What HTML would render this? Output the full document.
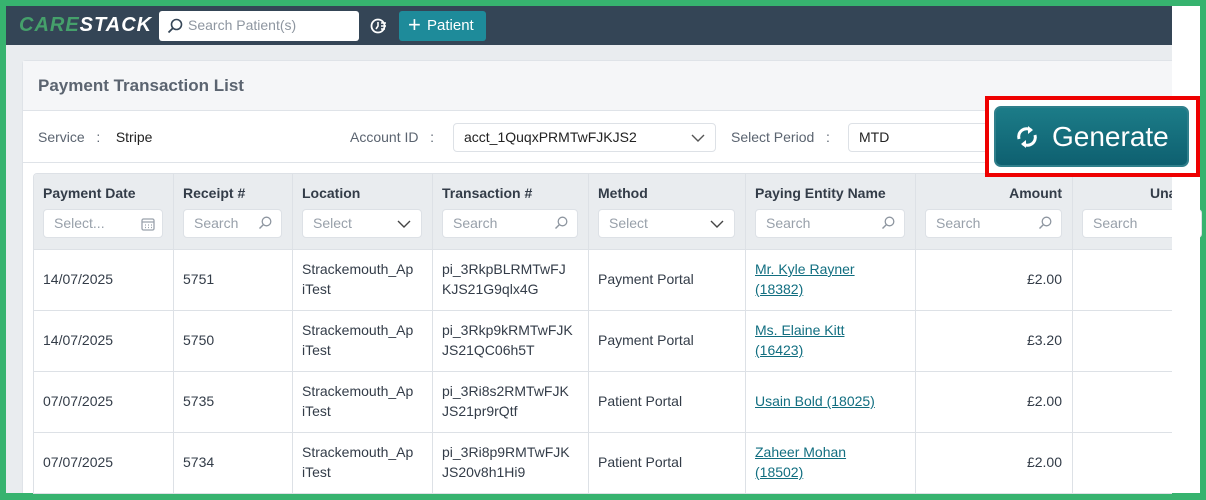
<!DOCTYPE html>
<html><head><style>
*{box-sizing:border-box;margin:0;padding:0}
body{width:1206px;height:500px;overflow:hidden;background:#37b36f;font-family:"Liberation Sans",sans-serif;position:relative;font-size:14px;color:#333c48}
.a{position:absolute}
.nav{left:6px;top:6px;width:1166px;height:39px;background:#344556}
.main{left:6px;top:45px;width:1166px;height:448px;background:#e9ecef;overflow:hidden}
.strip{left:1172px;top:6px;width:28px;height:487px;background:#fff;z-index:5}
.card{left:16px;top:15px;width:1160px;height:440px;background:#fff;border:1px solid #dfe3e8;border-radius:4px}
.inp{background:#fff;border:1px solid #dde1e6;border-radius:4px;height:29px;color:#98a0aa;font-size:14px;line-height:27px;padding-left:10px}
.th{font-weight:bold;font-size:14px;color:#333c48}
.cell{font-size:14px;color:#333c48;line-height:20px}
a{color:#116e80;text-decoration:underline}
</style></head><body>
<div class="a nav">
 <div class="a" style="left:13px;top:8px;font-weight:bold;font-style:italic;font-size:20px;letter-spacing:1px;color:#fff"><span style="color:#45a06b">CARE</span>STACK</div>
 <div class="a" style="left:153px;top:5px;width:200px;height:30px;background:#fff;border-radius:3px">
  <svg class="a" style="left:8px;top:7px" width="16" height="16" viewBox="0 0 16 16"><circle cx="9.5" cy="6.5" r="5" fill="none" stroke="#344556" stroke-width="1.6"/><path d="M6 10L1.5 14.5" stroke="#344556" stroke-width="1.8"/></svg>
  <div class="a" style="left:29px;top:6px;color:#8e96a0;font-size:14px">Search Patient(s)</div>
 </div>
 <svg class="a" style="left:364px;top:11px" width="18" height="18" viewBox="0 0 18 18"><circle cx="8" cy="9" r="6.5" fill="none" stroke="#fff" stroke-width="1.8"/><path d="M8 5v4l-2 3M11 6h5M11 9h5M11 12h4" stroke="#fff" stroke-width="1.6"/></svg>
 <div class="a" style="left:393px;top:5px;width:87px;height:30px;background:#1e8b9a;border-radius:3px;color:#fff;font-size:15px;line-height:30px;padding-left:28px">Patient</div>
 <div class="a" style="left:402px;top:9px;color:#fff;font-size:22px;line-height:20px">+</div>
</div>
<div class="a main">
 <div class="a card">
  <div class="a" style="left:0;top:0;width:1160px;height:50px;background:#f5f6f8;border-bottom:1px solid #dfe3e8"></div>
  <div class="a" style="left:15px;top:15px;font-weight:bold;font-size:17px;color:#5b6470">Payment Transaction List</div>
  <div class="a" style="left:15px;top:68px;color:#5b6470">Service &nbsp;&nbsp;:&nbsp;&nbsp;&nbsp; <span style="color:#222">Stripe</span></div>
  <div class="a" style="left:327px;top:68px;color:#5b6470">Account ID &nbsp;&nbsp;:</div>
  <div class="a inp" style="left:430px;top:62px;width:263px;color:#222">acct_1QuqxPRMTwFJKJS2</div>
  <svg class="a" style="left:668px;top:72px" width="14" height="10"><path d="M1 2l6 6 6-6" fill="none" stroke="#555" stroke-width="1.4"/></svg>
  <div class="a" style="left:708px;top:68px;color:#5b6470">Select Period &nbsp;&nbsp;:</div>
  <div class="a inp" style="left:825px;top:62px;width:200px;color:#222">MTD</div>
  <div class="a" style="left:0;top:101px;width:1160px;border-top:1px solid #dfe3e8"></div>
 </div>
 <div class="a" style="left:27px;top:128px;width:1150px;height:330px;background:#fff;border:1px solid #dde1e6;border-radius:4px 0 0 0;overflow:hidden">
  <div class="a" style="left:0;top:0;width:1150px;height:76px;background:#e9ecef;border-bottom:1px solid #dde1e6"></div>
 </div>
</div>
<div id="t"></div>
<div class="a strip"></div>
<script>
var cols=[33,173,292,432,588,745,915,1072,1180];
var heads=["Payment Date","Receipt #","Location","Transaction #","Method","Paying Entity Name","Amount","Una"];
var filt=[["Select...","cal"],["Search","s"],["Select","d"],["Search","s"],["Select","d"],["Search","s"],["Search","s"],["Search",""]];
var rows=[["14/07/2025","5751","Strackemouth_Ap<br>iTest","pi_3RkpBLRMTwFJ<br>KJS21G9qlx4G","Payment Portal","<a>Mr. Kyle Rayner<br>(18382)</a>","£2.00"],
["14/07/2025","5750","Strackemouth_Ap<br>iTest","pi_3Rkp9kRMTwFJK<br>JS21QC06h5T","Payment Portal","<a>Ms. Elaine Kitt<br>(16423)</a>","£3.20"],
["07/07/2025","5735","Strackemouth_Ap<br>iTest","pi_3Ri8s2RMTwFJK<br>JS21pr9rQtf","Patient Portal","<a>Usain Bold (18025)</a>","£2.00"],
["07/07/2025","5734","Strackemouth_Ap<br>iTest","pi_3Ri8p9RMTwFJK<br>JS20v8h1Hi9","Patient Portal","<a>Zaheer Mohan<br>(18502)</a>","£2.00"]];
var h="";
for(var i=1;i<8;i++)h+='<div class="a" style="left:'+cols[i]+'px;top:174px;width:1px;height:320px;background:#dde1e6"></div>';
for(var r=0;r<4;r++)h+='<div class="a" style="left:33px;top:'+(310+r*61)+'px;width:1139px;height:1px;background:#dde1e6"></div>';
for(var i=0;i<8;i++){var x=cols[i]+10,w=cols[i+1]-cols[i]-20;
 if(i==6)h+='<div class="a th" style="left:'+x+'px;width:'+w+'px;top:185px;text-align:right">'+heads[i]+'</div>';
 else if(i==7)h+='<div class="a th" style="left:1150px;top:185px">'+heads[i]+'</div>';
 else h+='<div class="a th" style="left:'+x+'px;top:185px">'+heads[i]+'</div>';
 var fw=(i==7)?120:w;
 h+='<div class="a inp" style="left:'+x+'px;top:209px;width:'+fw+'px">'+filt[i][0]+'</div>';
 var ix=x+fw-24;
 if(filt[i][1]=="s")h+='<svg class="a" style="left:'+ix+'px;top:216px" width="14" height="14"><circle cx="8.5" cy="5.5" r="4.3" fill="none" stroke="#8e96a0" stroke-width="1.3"/><path d="M5.5 8.5L1.5 12.5" stroke="#8e96a0" stroke-width="1.4"/></svg>';
 if(filt[i][1]=="d")h+='<svg class="a" style="left:'+(ix-2)+'px;top:219px" width="16" height="10"><path d="M2 2l6 6 6-6" fill="none" stroke="#444" stroke-width="1.4"/></svg>';
 if(filt[i][1]=="cal")h+='<svg class="a" style="left:'+(ix+2)+'px;top:217px" width="14" height="14"><rect x="1" y="2" width="12" height="11" rx="1.5" fill="none" stroke="#9aa2ac" stroke-width="1.3"/><path d="M1 5h12M4 8h1M7 8h1M10 8h1M4 10.5h1M7 10.5h1M10 10.5h1" stroke="#9aa2ac" stroke-width="1.2"/></svg>';
}
for(var r=0;r<4;r++){var y=249+r*61;
 for(var i=0;i<7;i++){var x=cols[i]+10,w=cols[i+1]-cols[i]-20;var t=rows[r][i];var two=t.indexOf("<br>")>=0;
  h+='<div class="a cell" style="left:'+x+'px;width:'+w+'px;top:'+(y+(two?10:20))+'px;'+(i==6?'text-align:right':'')+'">'+t+'</div>';}
}
h+='<div class="a" style="left:985px;top:96px;width:215px;height:81px;background:#fff;border:4px solid #e00;z-index:6"></div>';
h+='<div class="a" style="left:994px;top:106px;width:195px;height:61px;border-radius:7px;background:linear-gradient(#1c7c88,#0e6070);border:2px solid #2f7f8b;color:#fff;font-size:28px;line-height:57px;padding-left:56px;z-index:7">Generate</div>';
h+='<svg class="a" style="left:1014px;top:124px;z-index:8" width="26" height="26" viewBox="0 0 26 26"><path d="M5 15A8 8 0 0 1 17 6" fill="none" stroke="#fff" stroke-width="3"/><path d="M14 2l5 4-5 4z" fill="#fff"/><path d="M21 11A8 8 0 0 1 9 20" fill="none" stroke="#fff" stroke-width="3"/><path d="M12 24l-5-4 5-4z" fill="#fff"/></svg>';
document.getElementById("t").innerHTML=h;
</script>
</body></html>
